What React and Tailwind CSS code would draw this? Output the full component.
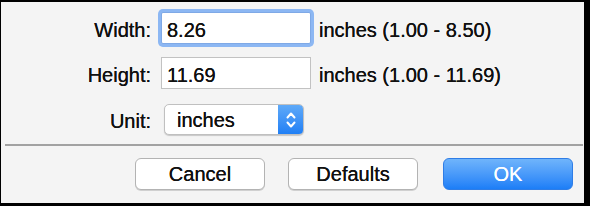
import React from "react";

const font = { fontFamily: '"Liberation Sans", Arial, sans-serif' };

function Label({ children }) {
  return (
    <div className="w-[150px] shrink-0 text-right text-[20px] text-[#111] h-[32px] pt-[4px] leading-[28px]">
      {children}
    </div>
  );
}

function Field({ value, focused }) {
  return (
    <div
      className={
        "ml-[10px] w-[150px] h-[32px] bg-white border pl-[5px] pt-[4px] text-[20px] leading-[26px] text-[#111] " +
        (focused
          ? "border-[#7fa9e6] rounded-[2px] shadow-[0_0_0_3px_#8cb7f3]"
          : "border-[#c2c2c2]")
      }
    >
      {value}
    </div>
  );
}

function Button({ children, primary, className = "" }) {
  return (
    <div
      className={
        "w-[130px] h-[32px] rounded-[6px] flex items-center justify-center text-[20px] " +
        (primary
          ? "bg-gradient-to-b from-[#6fb4fb] to-[#1b7ef7] border border-[#2f7de6] text-white [text-shadow:0_0_0.6px_#fff]"
          : "bg-white border border-[#b3b3b3] text-[#111] shadow-[0_1px_0_#d0d0d0]") +
        " " +
        className
      }
    >
      {children}
    </div>
  );
}

export default function App() {
  return (
    <div
      className="w-[590px] h-[206px] bg-black pt-[2px] pl-[1px] pr-[6px] pb-[3px] [text-shadow:0_0_0.5px_#000]"
      style={font}
    >
      <div className="h-full bg-[#f4f4f4] flex flex-col pt-[10px]">
        <div className="flex items-center">
          <Label>Width:</Label>
          <Field value="8.26" focused />
          <div className="ml-[8px] text-[20px] text-[#111] h-[32px] pt-[4px] leading-[28px]">
            inches (1.00 - 8.50)
          </div>
        </div>
        <div className="flex items-center mt-[13px]">
          <Label>Height:</Label>
          <Field value="11.69" />
          <div className="ml-[8px] text-[20px] text-[#111] h-[32px] pt-[4px] leading-[28px]">
            inches (1.00 - 11.69)
          </div>
        </div>
        <div className="flex items-center mt-[15px]">
          <div className="w-[150px] shrink-0 text-right text-[20px] text-[#111] h-[31px] pt-[4px] leading-[27px]">
            Unit:
          </div>
          <div className="ml-[13px] w-[140px] h-[31px] flex rounded-[5px] border border-[#c0c0c0] bg-white shadow-[0_1px_1px_#c8c8c8] overflow-hidden">
            <div className="flex-1 pl-[12px] pt-[2px] text-[20px] leading-[27px] text-[#111]">
              inches
            </div>
            <div className="w-[25px] h-full bg-gradient-to-b from-[#5ea9f8] to-[#1f7ff5] flex items-center justify-center">
              <svg width="12" height="22" viewBox="0 0 12 22" fill="none">
                <path d="M2.5 8.5 L6 4.5 L9.5 8.5" stroke="white" strokeWidth="2" strokeLinecap="round" strokeLinejoin="round" />
                <path d="M2.5 13.5 L6 17.5 L9.5 13.5" stroke="white" strokeWidth="2" strokeLinecap="round" strokeLinejoin="round" />
              </svg>
            </div>
          </div>
        </div>
        <div className="mt-[9px] ml-[4px] mr-[1px] h-[2px] bg-[#a2a2a2]" />
        <div className="mt-[12px] flex justify-end pr-[11px]">
          <Button className="mr-[23px]">Cancel</Button>
          <Button className="mr-[25px]">Defaults</Button>
          <Button primary>OK</Button>
        </div>
      </div>
    </div>
  );
}
